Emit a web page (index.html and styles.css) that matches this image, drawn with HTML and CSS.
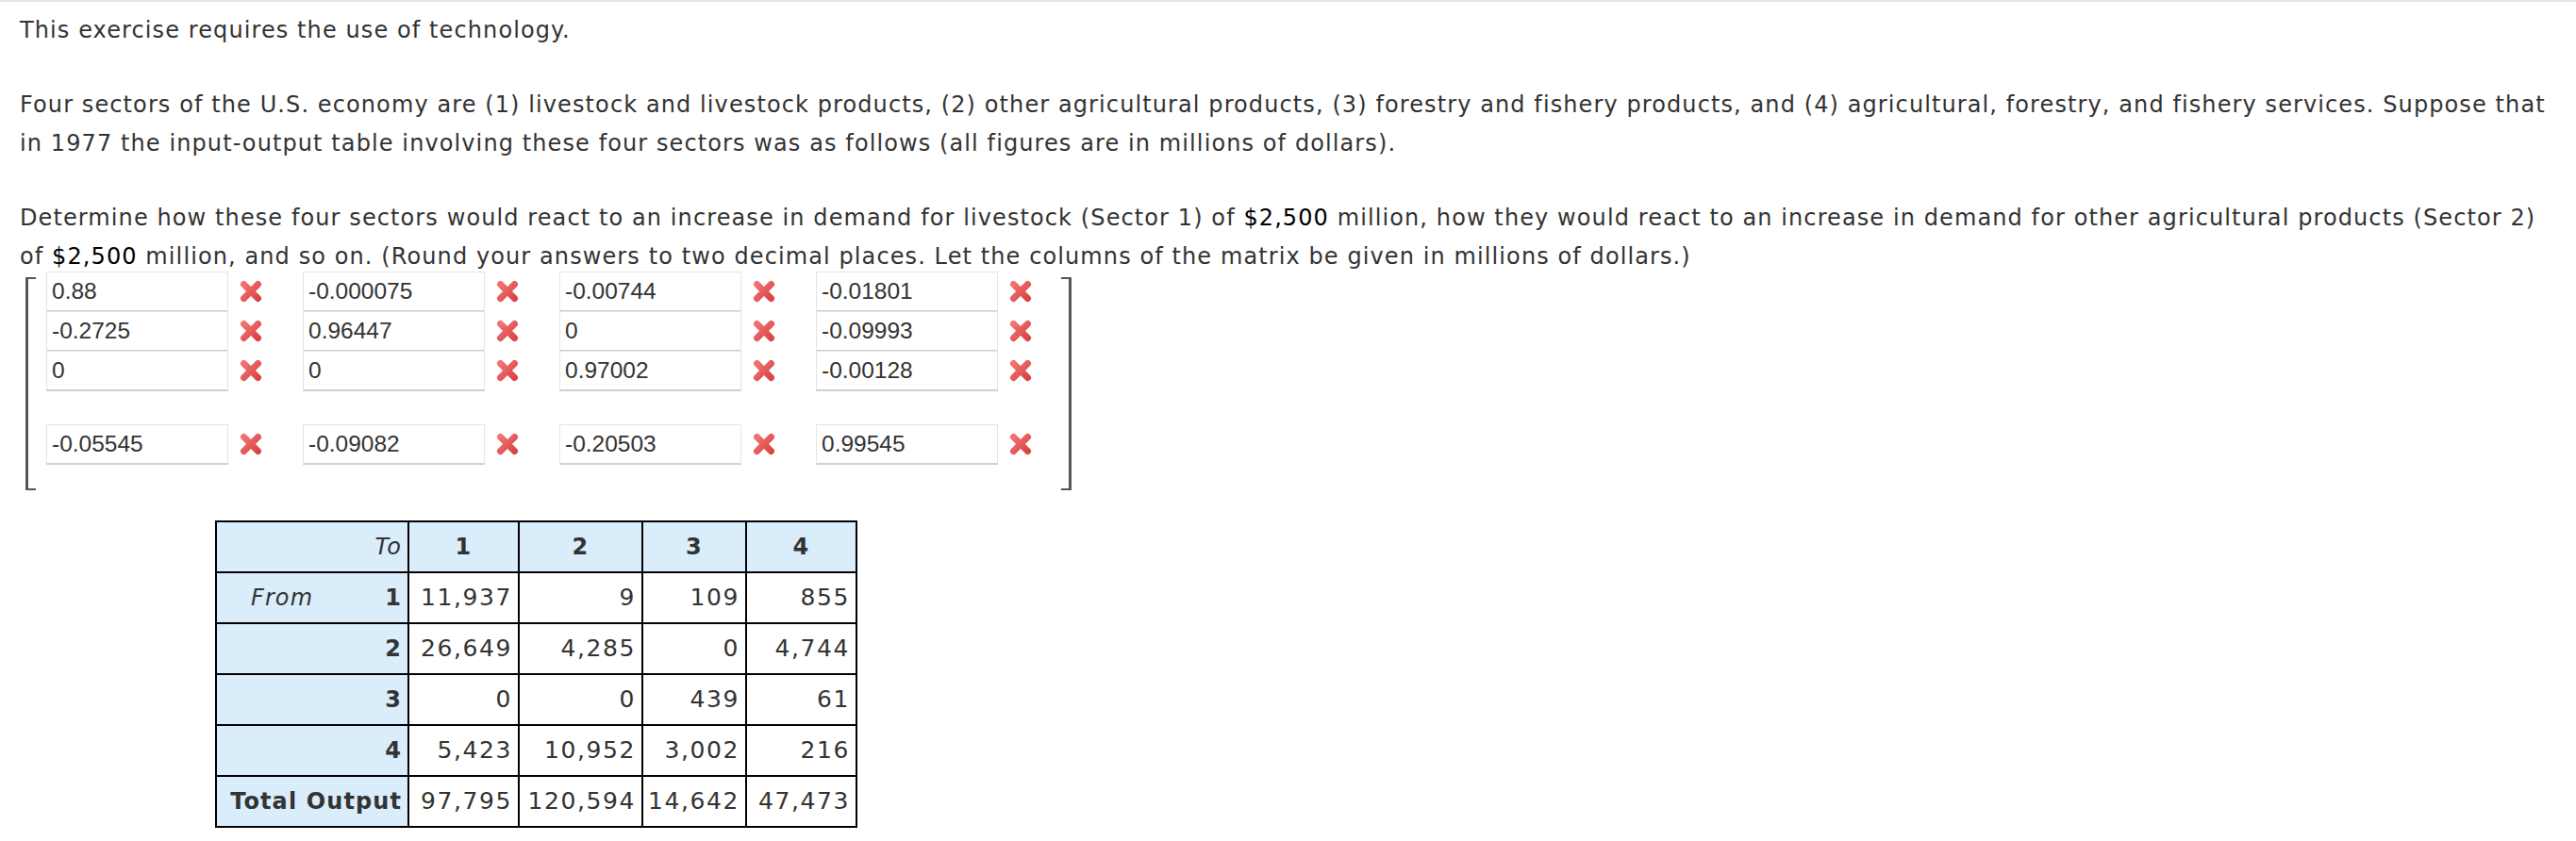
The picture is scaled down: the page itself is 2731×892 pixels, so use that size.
FILE: index.html
```html
<!DOCTYPE html>
<html>
<head>
<meta charset="utf-8">
<link rel="stylesheet" href="styles.css">
</head>
<body>
<div class="top-rule"></div>
<div class="content">
  <p class="para">This exercise requires the use of technology.</p>
  <p class="para">Four sectors of the U.S. economy are (1) livestock and livestock products, (2) other agricultural products, (3) forestry and fishery products, and (4) agricultural, forestry, and fishery services. Suppose that in 1977 the input-output table involving these four sectors was as follows (all figures are in millions of dollars).</p>
  <p class="para last">Determine how these four sectors would react to an increase in demand for livestock (Sector 1) of <span class="val">$2,500</span> million, how they would react to an increase in demand for other agricultural products (Sector 2) of <span class="val">$2,500</span> million, and so on. (Round your answers to two decimal places. Let the columns of the matrix be given in millions of dollars.)</p>

  <div class="matrix">
    <div class="bracket left"></div>
    <div class="grid">
      <div class="mrow">
        <div class="cell"><span class="box">0.88</span><svg class="xicon" viewBox="0 0 26 26"><use href="#x"/></svg></div>
        <div class="cell"><span class="box">-0.000075</span><svg class="xicon" viewBox="0 0 26 26"><use href="#x"/></svg></div>
        <div class="cell"><span class="box">-0.00744</span><svg class="xicon" viewBox="0 0 26 26"><use href="#x"/></svg></div>
        <div class="cell"><span class="box">-0.01801</span><svg class="xicon" viewBox="0 0 26 26"><use href="#x"/></svg></div>
      </div>
      <div class="mrow">
        <div class="cell"><span class="box">-0.2725</span><svg class="xicon" viewBox="0 0 26 26"><use href="#x"/></svg></div>
        <div class="cell"><span class="box">0.96447</span><svg class="xicon" viewBox="0 0 26 26"><use href="#x"/></svg></div>
        <div class="cell"><span class="box">0</span><svg class="xicon" viewBox="0 0 26 26"><use href="#x"/></svg></div>
        <div class="cell"><span class="box">-0.09993</span><svg class="xicon" viewBox="0 0 26 26"><use href="#x"/></svg></div>
      </div>
      <div class="mrow">
        <div class="cell"><span class="box">0</span><svg class="xicon" viewBox="0 0 26 26"><use href="#x"/></svg></div>
        <div class="cell"><span class="box">0</span><svg class="xicon" viewBox="0 0 26 26"><use href="#x"/></svg></div>
        <div class="cell"><span class="box">0.97002</span><svg class="xicon" viewBox="0 0 26 26"><use href="#x"/></svg></div>
        <div class="cell"><span class="box">-0.00128</span><svg class="xicon" viewBox="0 0 26 26"><use href="#x"/></svg></div>
      </div>
      <div class="mrow spaced">
        <div class="cell"><span class="box">-0.05545</span><svg class="xicon" viewBox="0 0 26 26"><use href="#x"/></svg></div>
        <div class="cell"><span class="box">-0.09082</span><svg class="xicon" viewBox="0 0 26 26"><use href="#x"/></svg></div>
        <div class="cell"><span class="box">-0.20503</span><svg class="xicon" viewBox="0 0 26 26"><use href="#x"/></svg></div>
        <div class="cell"><span class="box">0.99545</span><svg class="xicon" viewBox="0 0 26 26"><use href="#x"/></svg></div>
      </div>
    </div>
    <div class="bracket right"></div>
  </div>

  <table class="io">
    <colgroup>
      <col class="c0">
      <col class="c1">
      <col class="c2">
      <col class="c3">
      <col class="c4">
    </colgroup>
    <tr class="hdr">
      <th class="side to">To</th>
      <th class="colh">1</th>
      <th class="colh">2</th>
      <th class="colh">3</th>
      <th class="colh">4</th>
    </tr>
    <tr>
      <th class="side"><span class="from">From</span><b>1</b></th>
      <td>11,937</td><td>9</td><td>109</td><td>855</td>
    </tr>
    <tr>
      <th class="side"><b>2</b></th>
      <td>26,649</td><td>4,285</td><td>0</td><td>4,744</td>
    </tr>
    <tr>
      <th class="side"><b>3</b></th>
      <td>0</td><td>0</td><td>439</td><td>61</td>
    </tr>
    <tr>
      <th class="side"><b>4</b></th>
      <td>5,423</td><td>10,952</td><td>3,002</td><td>216</td>
    </tr>
    <tr>
      <th class="side"><b>Total Output</b></th>
      <td>97,795</td><td>120,594</td><td>14,642</td><td>47,473</td>
    </tr>
  </table>
</div>

<svg class="defs" width="0" height="0">
  <defs>
    <linearGradient id="xg" x1="0" y1="0" x2="1" y2="1">
      <stop offset="0" stop-color="#f27373"/>
      <stop offset="1" stop-color="#d84545"/>
    </linearGradient>
    <g id="x">
      <path d="M5.5 5.5 L20.5 20.5 M20.5 5.5 L5.5 20.5" stroke="url(#xg)" stroke-width="7" stroke-linecap="round" fill="none"/>
    </g>
  </defs>
</svg>
</body>
</html>
```
FILE: styles.css
```css
html, body {
  margin: 0;
  padding: 0;
  background: #fff;
}

body {
  font-family: "DejaVu Sans", Verdana, sans-serif;
  font-size: 24px;
  letter-spacing: 1.1px;
  color: #333;
}

.top-rule {
  height: 2px;
  background: #e2e2e2;
}

.content {
  padding: 10px 10px 0 21px;
}

.para {
  margin: 0 0 38px 0;
  line-height: 41px;
}

.para.last {
  margin-bottom: 0;
}

.val {
  color: #000;
}

.matrix {
  display: flex;
  margin-left: 6px;
  margin-top: -5px;
  letter-spacing: 0;
}

.bracket {
  width: 8px;
  margin-top: 6px;
  border-top: 2px solid #555;
  border-bottom: 2px solid #555;
}

.bracket.left {
  border-left: 3px solid #555;
}

.bracket.right {
  border-right: 3px solid #555;
  margin-left: 30px;
}

.grid {
  margin-left: 11px;
  padding-bottom: 28px;
  display: flex;
  flex-direction: column;
}

.mrow {
  display: flex;
  gap: 42px;
}

.mrow.spaced {
  margin-top: 36px;
}

.cell {
  display: flex;
  align-items: center;
}

.box {
  box-sizing: border-box;
  width: 193px;
  height: 43px;
  margin-bottom: -1px;
  border: 1px solid #e4e4e4;
  border-bottom: 2px solid #cfcfcf;
  background: #fff;
  padding: 0 5px;
  font-family: "Liberation Sans", Arial, sans-serif;
  font-size: 24.5px;
  line-height: 40px;
  color: #333;
}

.xicon {
  width: 26px;
  height: 26px;
  margin-left: 11px;
}

.defs {
  position: absolute;
  width: 0;
  height: 0;
}

.io {
  border-collapse: collapse;
  table-layout: fixed;
  width: 679px;
  margin: 32px 0 0 207px;
  font-size: 24px;
  color: #333;
}

.io .c0 { width: 204px; }
.io .c1 { width: 117px; }
.io .c2 { width: 131px; }
.io .c3 { width: 110px; }
.io .c4 { width: 117px; }

.io th,
.io td {
  border: 2px solid #000;
  padding: 6px 8px 6px 2px;
  line-height: 40px;
  text-align: right;
  font-weight: normal;
  white-space: nowrap;
}

.io td {
  background: #fff;
  font-size: 25px;
  letter-spacing: 1.6px;
  padding-right: 6px;
}

.io .side,
.io .colh {
  background: #d9edfb;
}

.io .side {
  padding-right: 6px;
}

.io .colh {
  text-align: center;
  font-weight: bold;
  padding: 6px 2px;
}

.io .to {
  font-style: italic;
}

.io .from {
  float: left;
  font-style: italic;
  margin-left: 34px;
}
```
